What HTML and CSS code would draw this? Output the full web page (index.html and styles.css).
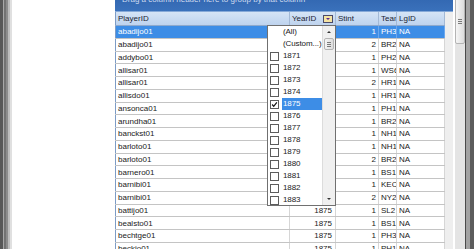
FILE: index.html
```html
<!DOCTYPE html>
<html lang="en">
<head>
    <meta charset="UTF-8">
    <title>Batting grid</title>
    <link rel="stylesheet" href="styles.css">
</head>
<body>
    <div class="screen">
        <div class="frame-left"></div>
        <div class="blank"></div>

        <div class="grid">
            <div class="group-panel">Drag a column header here to group by that column</div>

            <div class="head cols">
                <div class="hcell">PlayerID</div>
                <div class="hcell">YearID <span class="filter-btn"></span></div>
                <div class="hcell">Stint</div>
                <div class="hcell">Team</div>
                <div class="hcell">LgID</div>
            </div>

            <div class="rows" id="rows"></div>

            <!-- filter dropdown of the YearID column -->
            <div class="filter-popup">
                <div class="filter-list" id="filterList"></div>
                <div class="popup-scroll">
                    <div class="arrow up"></div>
                    <div class="popup-thumb"><i></i><i></i><i></i></div>
                    <div class="popup-track"></div>
                    <div class="arrow down"></div>
                </div>
            </div>
        </div>

        <div class="vscroll">
            <div class="vthumb"><i></i><i></i><i></i></div>
        </div>
        <div class="frame-right"></div>
    </div>

    <script>
        // rows: player, year, stint, team, league
        const rows = [
            ['abadijo01', '1875', 1, 'PH3', 'NA'],
            ['abadijo01', '1875', 2, 'BR2', 'NA'],
            ['addybo01', '1875', 1, 'PH2', 'NA'],
            ['allisar01', '1875', 1, 'WS6', 'NA'],
            ['allisar01', '1875', 2, 'HR1', 'NA'],
            ['allisdo01', '1875', 1, 'HR1', 'NA'],
            ['ansonca01', '1875', 1, 'PH1', 'NA'],
            ['arundha01', '1875', 1, 'BR2', 'NA'],
            ['banckst01', '1875', 1, 'NH1', 'NA'],
            ['barloto01', '1875', 1, 'NH1', 'NA'],
            ['barloto01', '1875', 2, 'BR2', 'NA'],
            ['barnero01', '1875', 1, 'BS1', 'NA'],
            ['barnibi01', '1875', 1, 'KEC', 'NA'],
            ['barnibi01', '1875', 2, 'NY2', 'NA'],
            ['battijo01', '1875', 1, 'SL2', 'NA'],
            ['bealsto01', '1875', 1, 'BS1', 'NA'],
            ['bechtge01', '1875', 1, 'PH3', 'NA'],
            ['beckjo01', '1875', 1, 'PH1', 'NA']
        ];

        const rowsEl = document.getElementById('rows');
        rows.forEach((r, i) => {
            const row = document.createElement('div');
            row.className = 'row cols' + (i === 0 ? ' selected' : '');
            row.innerHTML =
                `<div class="cell">${r[0]}</div>` +
                `<div class="cell num">${r[1]}</div>` +
                `<div class="cell num">${r[2]}</div>` +
                `<div class="cell">${r[3]}</div>` +
                `<div class="cell">${r[4]}</div>`;
            rowsEl.appendChild(row);
        });

        // filter values
        const items = ['(All)', '(Custom...)'];
        for (let y = 1871; y <= 1883; y++) items.push(String(y));

        const list = document.getElementById('filterList');
        items.forEach(label => {
            const item = document.createElement('div');
            const isYear = !label.startsWith('(');
            const checked = label === '1875';
            item.className = 'filter-item' + (checked ? ' current' : '');
            item.innerHTML =
                (isYear ? `<span class="check">${checked ? '<svg viewBox="0 0 9 9"><polyline points="1.5,4.5 3.5,6.8 7.5,1.8" /></svg>' : ''}</span>` : '<span class="no-check"></span>') +
                `<span class="label">${label}</span>`;
            list.appendChild(item);
        });
    </script>
</body>
</html>
```

FILE: styles.css
```css
body {
    margin: 0;
    overflow: hidden;
    background: #fff;
    font-family: 'Liberation Sans', Arial, sans-serif;
    font-size: 8px;
    color: #1a1a1a;
}

.screen {
    display: flex;
    width: 474px;
    height: 249px;
    overflow: hidden;
}

/* window frame */
.frame-left {
    width: 12px;
    flex-shrink: 0;
    background: linear-gradient(to right,
        #585858 0, #585858 3px,
        #a8a8a8 3px, #a8a8a8 4px,
        #727272 4px, #727272 6px,
        #8c8c8c 6px, #8c8c8c 8px,
        #bdbdbd 8px, #bdbdbd 10px,
        #e0e0e0 10px);
}

.blank {
    width: 103px;
    flex-shrink: 0;
    background: #fff;
}

.frame-right {
    width: 9px;
    flex-shrink: 0;
    background: linear-gradient(to right,
        #4a4a4a 0, #4a4a4a 1px,
        #a2a2a2 1px, #a2a2a2 5px,
        #5c5c5c 5px);
}

/* grid */
.grid {
    position: relative;
    width: 338px;
    flex-shrink: 0;
    margin-right: 2px;
    background: #eeeeee;
    display: flex;
    flex-direction: column;
}

.grid > * {
    flex-shrink: 0;
}

.group-panel {
    margin-top: -8px;
    height: 20px;
    padding: 3px 0 0 7px;
    box-sizing: border-box;
    background: linear-gradient(#2f63ad, #3a71bb);
    border-bottom: 1px solid #86a9d8;
    color: #cfdcf0;
    white-space: nowrap;
    overflow: hidden;
}

.cols {
    display: grid;
    grid-template-columns: 175px 46px 43px 18px 48px;
    width: 330px;
}

.head {
    height: 14px;
    box-sizing: border-box;
    background: linear-gradient(#d5e4f6, #bed3ee);
    border-bottom: 1px solid #8ea9cc;
}

.hcell {
    display: flex;
    align-items: center;
    padding-left: 2px;
    border-right: 1px solid #a3b9d6;
    overflow: hidden;
    white-space: nowrap;
    color: #1b2433;
}

.hcell:first-child {
    border-left: 1px solid #7d9cc6;
}

.filter-btn {
    margin-left: auto;
    margin-right: 2px;
    width: 10px;
    height: 8px;
    box-sizing: border-box;
    border: 1px solid #4a4a6a;
    background: #f4e3a4;
    position: relative;
}

.filter-btn::after {
    content: '';
    position: absolute;
    left: 2px;
    top: 2px;
    border-left: 2px solid transparent;
    border-right: 2px solid transparent;
    border-top: 2px solid #5a2a8e;
}

.row {
    height: 12.75px;
    box-sizing: border-box;
    background: #fff;
    border-bottom: 1px solid #c4c4c4;
}

.cell {
    display: flex;
    align-items: center;
    padding-left: 2px;
    border-right: 1px solid #d6d6d6;
    overflow: hidden;
    white-space: nowrap;
}

.cell:first-child {
    border-left: 1px solid #7d9cc6;
}

.cell.num {
    justify-content: flex-end;
    padding: 0 2px 0 0;
}

.row .cell:nth-child(2) {
    padding-right: 3px;
}

.row.selected {
    background: #3d8de6;
    color: #fff;
}

.row.selected .cell {
    border-right-color: #6aa7ee;
}

/* dropdown */
.filter-popup {
    position: absolute;
    left: 152px;
    top: 25px;
    width: 69px;
    height: 181px;
    box-sizing: border-box;
    border: 1px solid #707070;
    background: #fff;
    display: flex;
}

.filter-list {
    flex: 1;
    min-width: 0;
}

.filter-item {
    display: flex;
    align-items: center;
    height: 12px;
}

.check {
    width: 9px;
    height: 9px;
    flex-shrink: 0;
    box-sizing: border-box;
    margin: 0 3px 0 2px;
    border: 1px solid #5c5c5c;
    background: #fff;
}

.check svg {
    display: block;
    width: 7px;
    height: 7px;
}

.check polyline {
    fill: none;
    stroke: #111;
    stroke-width: 1.6;
}

.no-check {
    width: 14px;
    flex-shrink: 0;
}

.label {
    flex: 1;
    min-width: 0;
    height: 12px;
    line-height: 12px;
    padding-left: 1px;
    white-space: nowrap;
    overflow: hidden;
    letter-spacing: -0.1px;
}

.filter-item.current .label {
    background: #3d8de6;
    color: #fff;
}

.popup-scroll {
    width: 12px;
    flex-shrink: 0;
    background: #f0f0f0;
    border-left: 1px solid #dcdcdc;
    display: flex;
    flex-direction: column;
}

.arrow {
    height: 12px;
    display: flex;
    align-items: center;
    justify-content: center;
}

.arrow::after {
    content: '';
    border-left: 2px solid transparent;
    border-right: 2px solid transparent;
}

.arrow.up::after {
    border-bottom: 2px solid #333;
}

.arrow.down::after {
    border-top: 2px solid #333;
}

.popup-thumb,
.vthumb {
    display: flex;
    flex-direction: column;
    align-items: center;
    justify-content: center;
    gap: 1px;
    box-sizing: border-box;
    border: 1px solid #b4b4b4;
    border-radius: 2px;
    background: linear-gradient(to right, #f6f6f6, #dcdcdc);
}

.popup-thumb {
    height: 12px;
    margin: 0 1px;
}

.popup-thumb i,
.vthumb i {
    display: block;
    width: 4px;
    height: 1px;
    background: #7a7a7a;
}

.popup-track {
    flex: 1;
}

/* outer scrollbar */
.vscroll {
    width: 10px;
    flex-shrink: 0;
    background: #e4e4e4;
}

.vthumb {
    height: 46px;
    margin-top: -2px;
}
```
